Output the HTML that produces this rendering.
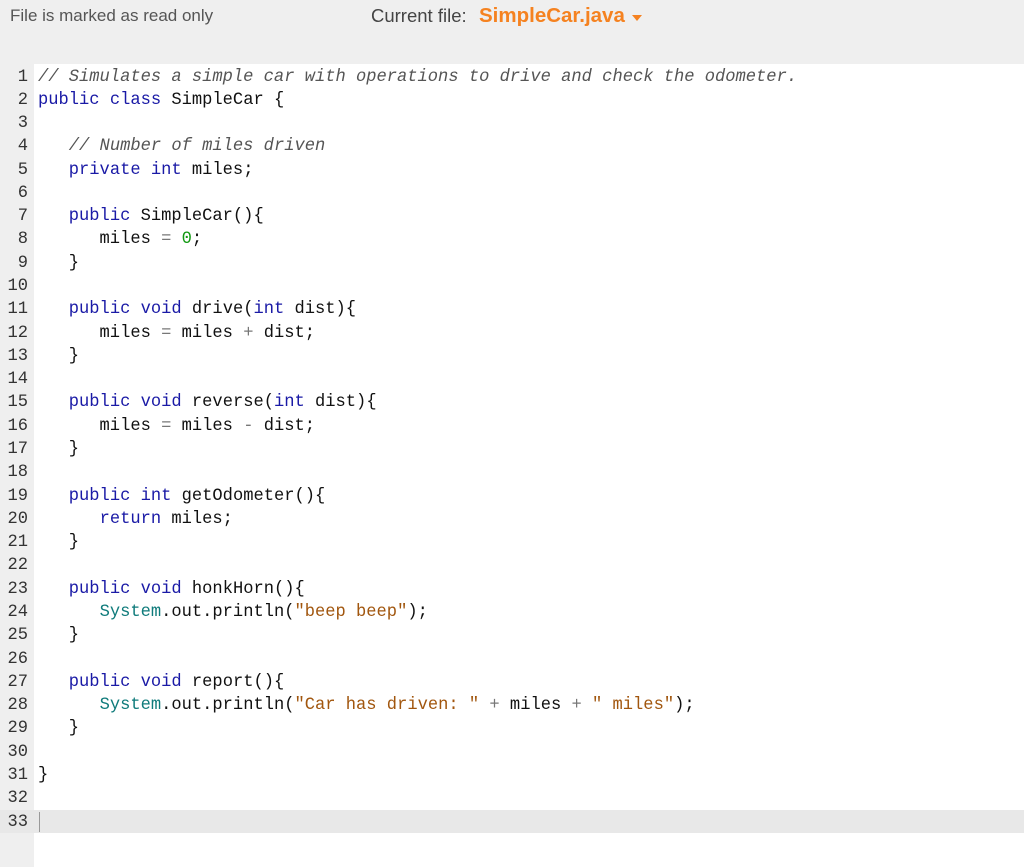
<!DOCTYPE html>
<html><head><meta charset="utf-8"><style>
html,body{margin:0;padding:0;width:1024px;height:867px;overflow:hidden;background:#fff;font-family:"Liberation Sans",sans-serif}
#top{position:absolute;left:0;top:0;width:1024px;height:64px;background:#efefef}
#ro{position:absolute;left:10px;top:6px;font-size:17px;color:#555}
#cf{position:absolute;left:371px;top:5px;font-size:18.5px;color:#444}
#fn{position:absolute;left:479px;top:4px;font-size:20.5px;color:#f58220;font-weight:bold}
#tri{position:absolute;left:632px;top:15px;width:0;height:0;border-left:5px solid transparent;border-right:5px solid transparent;border-top:6px solid #f58220}
#gut{position:absolute;left:0;top:64px;width:34px;height:803px;background:#efefef}
#act{position:absolute;left:0;top:810px;width:1024px;height:23.3px;background:#e8e8e8}
#ln{position:absolute;left:0;top:65.5px;width:28px;text-align:right;font-family:"Liberation Mono",monospace;font-size:17.1px;line-height:23.28px;color:#333;white-space:pre}
#code{position:absolute;left:38px;top:65.5px;font-family:"Liberation Mono",monospace;font-size:17.1px;line-height:23.28px;color:#111;white-space:pre;margin:0}
.k{color:#1a1aa6}.c{color:#555;font-style:italic}.n{color:#119911}.s{color:#a1560e}.t{color:#0f7b7b}.o{color:#777}
#cur{position:absolute;left:39px;top:812px;width:1px;height:20px;background:#999}
</style></head><body>
<div id="top"><div id="ro">File is marked as read only</div><div id="cf">Current file:</div><div id="fn">SimpleCar.java</div><div id="tri"></div></div>
<div id="gut"></div><div id="act"></div>
<div id="ln">1
2
3
4
5
6
7
8
9
10
11
12
13
14
15
16
17
18
19
20
21
22
23
24
25
26
27
28
29
30
31
32
33</div>
<pre id="code"><span class="c">// Simulates a simple car with operations to drive and check the odometer.</span>
<span class="k">public</span> <span class="k">class</span> SimpleCar {

   <span class="c">// Number of miles driven</span>
   <span class="k">private</span> <span class="k">int</span> miles;

   <span class="k">public</span> SimpleCar(){
      miles <span class="o">=</span> <span class="n">0</span>;
   }

   <span class="k">public</span> <span class="k">void</span> drive(<span class="k">int</span> dist){
      miles <span class="o">=</span> miles <span class="o">+</span> dist;
   }

   <span class="k">public</span> <span class="k">void</span> reverse(<span class="k">int</span> dist){
      miles <span class="o">=</span> miles <span class="o">-</span> dist;
   }

   <span class="k">public</span> <span class="k">int</span> getOdometer(){
      <span class="k">return</span> miles;
   }

   <span class="k">public</span> <span class="k">void</span> honkHorn(){
      <span class="t">System</span>.out.println(<span class="s">"beep beep"</span>);
   }

   <span class="k">public</span> <span class="k">void</span> report(){
      <span class="t">System</span>.out.println(<span class="s">"Car has driven: "</span> <span class="o">+</span> miles <span class="o">+</span> <span class="s">" miles"</span>);
   }

}

</pre>
<div id="cur"></div>
</body></html>
